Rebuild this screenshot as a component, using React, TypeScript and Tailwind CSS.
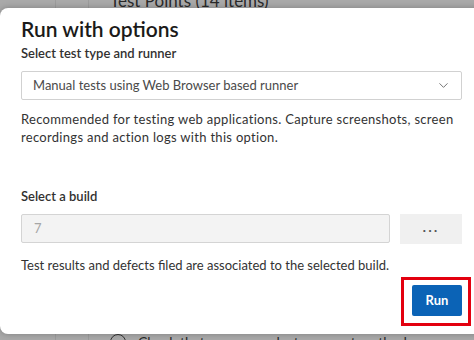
import * as React from 'react';
import { ChevronDown } from 'lucide-react';

const font = { fontFamily: 'Lato, "Noto Sans", sans-serif' };

const RunDialog: React.FunctionComponent = () => {
  return (
    <div className="absolute left-0 top-[8px] w-[490px] h-[326px] rounded-[8px] bg-white pl-[21px] pr-[28px] pt-[7px] shadow-[0_0_6px_rgba(0,0,0,0.25)]">
      <h2 className="text-[21px] leading-[28px] font-semibold text-[#1b1a19]">Run with options</h2>
      <p className="mt-[1px] text-[13px] leading-[18px] font-semibold text-[#323130]">Select test type and runner</p>

      <div className="mt-[9px] h-[29px] flex items-center justify-between border border-[#d1d1d1] rounded-[2px] pl-[11px] pr-[10px]">
        <span className="text-[13px] text-[#4a4a4a]">Manual tests using Web Browser based runner</span>
        <ChevronDown size={15} strokeWidth={1.4} className="text-[#616161]" />
      </div>

      <p className="mt-[10px] text-[13px] leading-[18px] tracking-[0.3px] text-[#333333]">
        Recommended for testing web applications. Capture screenshots, screen recordings and action logs with this option.
      </p>

      <p className="mt-[41px] text-[13px] leading-[18px] font-semibold text-[#323130]">Select a build</p>

      <div className="mt-[9px] flex gap-[10px]">
        <div className="h-[29px] flex-1 flex items-center border border-[#d4d4d4] bg-[#f3f3f3] rounded-[2px] pl-[12px] text-[13px] text-[#a6a6a6]">
          7
        </div>
        <button className="w-[62px] h-[30px] bg-[#f0f0f0] flex items-center justify-center text-[#555] tracking-[2px] text-[14px]">
          ···
        </button>
      </div>

      <p className="mt-[12px] text-[13px] leading-[18px] text-[#333333]">
        Test results and defects filed are associated to the selected build.
      </p>

      <div className="mt-[11px] flex justify-end">
        <div className="relative">
          <button className="w-[50px] h-[31px] rounded-[2px] bg-[#0b63b6] text-white text-[13px] font-bold">Run</button>
          <div className="absolute left-[-11px] right-[-9px] top-[-8px] bottom-[-10px] border-[3px] border-[#e3000f]" />
        </div>
      </div>
    </div>
  );
};

export default function App() {
  return (
    <div className="relative w-[474px] h-[340px] overflow-hidden bg-[#a9a9a9]" style={font}>
      <div className="absolute left-[55px] top-0 bottom-0 w-px bg-[#9c9c9c]" />
      <div className="absolute left-[88px] top-0 bottom-0 w-px bg-[#9c9c9c]" />
      <div className="absolute left-[110px] top-[-12px] text-[17px] text-[#2a2a2a]">Test Points (14 items)</div>
      <div className="absolute left-[110px] top-[331px] flex items-center gap-[12px]">
        <div className="w-[16px] h-[16px] rounded-full border border-[#333]" />
        <span className="text-[14px] text-[#2a2a2a]">Check that user can select payment method</span>
      </div>
      <RunDialog />
    </div>
  );
}
